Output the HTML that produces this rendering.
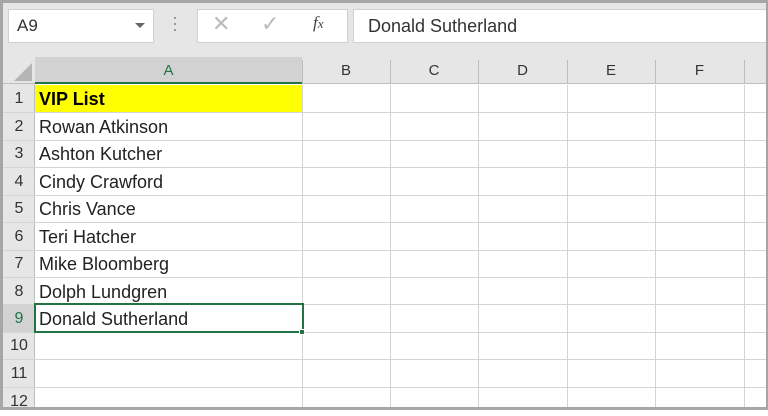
<!DOCTYPE html><html><head><style>
*{margin:0;padding:0;box-sizing:border-box}
body{width:768px;height:410px;overflow:hidden;background:#fff;font-family:"Liberation Sans",Calibri,sans-serif;position:relative}
.a{position:absolute}
.frame{left:0;top:0;width:768px;height:410px;border:3px solid #a6a6a6;border-right-width:2px;z-index:10}
.hl{background:#d4d4d4;height:1px}
.vl{background:#d4d4d4;width:1px}
.ch{top:57px;height:27px;line-height:27px;text-align:center;font-size:15px;color:#333}
.rh{left:3px;width:32px;text-align:center;font-size:16px;color:#333;height:27px;line-height:28px}
.c{left:39px;font-size:18px;color:#222;height:27px;line-height:28px}
</style></head><body>
<div class="a" style="left:0;top:0;width:768px;height:57px;background:#e6e6e6"></div>
<div class="a" style="left:8px;top:9px;width:146px;height:34px;background:#fff;border:1px solid #d0d0d0"></div>
<div class="a" style="left:17px;top:9px;line-height:34px;font-size:17px;color:#333">A9</div>
<div class="a" style="left:135px;top:23px;width:0;height:0;border-left:5px solid transparent;border-right:5px solid transparent;border-top:5px solid #666"></div>
<div class="a" style="left:174px;top:17px;width:2px;height:2px;background:#999;box-shadow:0 6px #999,0 12px #999"></div>
<div class="a" style="left:197px;top:9px;width:151px;height:34px;background:#fff;border:1px solid #d0d0d0"></div>
<div class="a" style="left:212px;top:11px;font-size:22px;color:#bbb">✕</div>
<div class="a" style="left:261px;top:11px;font-size:22px;color:#bbb">✓</div>
<div class="a" style="left:313px;top:13px;font-size:17px;color:#444;font-family:'Liberation Serif',serif;font-style:italic">f<span style="font-size:13px">x</span></div>
<div class="a" style="left:353px;top:9px;width:415px;height:34px;background:#fff;border:1px solid #d0d0d0"></div>
<div class="a" style="left:368px;top:9px;line-height:34px;font-size:18px;color:#333">Donald Sutherland</div>

<div class="a" style="left:0;top:57px;width:768px;height:27px;background:#e6e6e6;border-bottom:1px solid #bdbdbd"></div>
<div class="a" style="left:0;top:84px;width:35px;height:326px;background:#e6e6e6;border-right:1px solid #bdbdbd"></div>
<div class="a" style="left:14px;top:63px;width:0;height:0;border-left:18px solid transparent;border-bottom:18px solid #b5b5b5"></div>
<div class="a" style="left:35px;top:57px;width:267px;height:27px;background:#d2d2d2;border-bottom:2px solid #217346"></div>
<div class="a" style="left:34px;top:304px;width:2px;height:28px;background:#217346"></div>
<div class="a" style="left:3px;top:304px;width:32px;height:28px;background:#d2d2d2"></div>

<div class="a ch" style="left:35px;width:267px;color:#217346">A</div>
<div class="a ch" style="left:302px;width:88px">B</div>
<div class="a ch" style="left:390px;width:88px">C</div>
<div class="a ch" style="left:478px;width:89px">D</div>
<div class="a ch" style="left:567px;width:88px">E</div>
<div class="a ch" style="left:655px;width:89px">F</div>
<div class="a vl" style="left:302px;top:60px;height:24px;background:#bdbdbd"></div>
<div class="a vl" style="left:390px;top:60px;height:24px;background:#bdbdbd"></div>
<div class="a vl" style="left:478px;top:60px;height:24px;background:#bdbdbd"></div>
<div class="a vl" style="left:567px;top:60px;height:24px;background:#bdbdbd"></div>
<div class="a vl" style="left:655px;top:60px;height:24px;background:#bdbdbd"></div>
<div class="a vl" style="left:744px;top:60px;height:24px;background:#bdbdbd"></div>

<div class="a vl" style="left:302px;top:85px;height:325px"></div>
<div class="a vl" style="left:390px;top:85px;height:325px"></div>
<div class="a vl" style="left:478px;top:85px;height:325px"></div>
<div class="a vl" style="left:567px;top:85px;height:325px"></div>
<div class="a vl" style="left:655px;top:85px;height:325px"></div>
<div class="a vl" style="left:744px;top:85px;height:325px"></div>

<div class="a" style="left:35px;top:85px;width:267px;height:27px;background:#ffff00"></div>

<div class="a hl" style="left:0;top:112px;width:768px"></div>
<div class="a hl" style="left:0;top:140px;width:768px"></div>
<div class="a hl" style="left:0;top:167px;width:768px"></div>
<div class="a hl" style="left:0;top:195px;width:768px"></div>
<div class="a hl" style="left:0;top:222px;width:768px"></div>
<div class="a hl" style="left:0;top:250px;width:768px"></div>
<div class="a hl" style="left:0;top:277px;width:768px"></div>
<div class="a hl" style="left:0;top:304px;width:768px"></div>
<div class="a hl" style="left:0;top:332px;width:768px"></div>
<div class="a hl" style="left:0;top:359px;width:768px"></div>
<div class="a hl" style="left:0;top:387px;width:768px"></div>

<div class="a rh" style="top:85px">1</div>
<div class="a rh" style="top:113px">2</div>
<div class="a rh" style="top:140px">3</div>
<div class="a rh" style="top:168px">4</div>
<div class="a rh" style="top:195px">5</div>
<div class="a rh" style="top:223px">6</div>
<div class="a rh" style="top:250px">7</div>
<div class="a rh" style="top:278px">8</div>
<div class="a rh" style="top:305px;color:#217346">9</div>
<div class="a rh" style="top:332px">10</div>
<div class="a rh" style="top:360px">11</div>
<div class="a rh" style="top:388px">12</div>

<div class="a c" style="top:85px;font-weight:bold;color:#000">VIP List</div>
<div class="a c" style="top:113px">Rowan Atkinson</div>
<div class="a c" style="top:140px">Ashton Kutcher</div>
<div class="a c" style="top:168px">Cindy Crawford</div>
<div class="a c" style="top:195px">Chris Vance</div>
<div class="a c" style="top:223px">Teri Hatcher</div>
<div class="a c" style="top:250px">Mike Bloomberg</div>
<div class="a c" style="top:278px">Dolph Lundgren</div>
<div class="a c" style="top:305px">Donald Sutherland</div>

<div class="a" style="left:34px;top:303px;width:270px;height:30px;border:2px solid #217346"></div>
<div class="a" style="left:299px;top:329px;width:6px;height:6px;background:#217346;border:1px solid #fff"></div>
<div class="a frame"></div>
</body></html>
